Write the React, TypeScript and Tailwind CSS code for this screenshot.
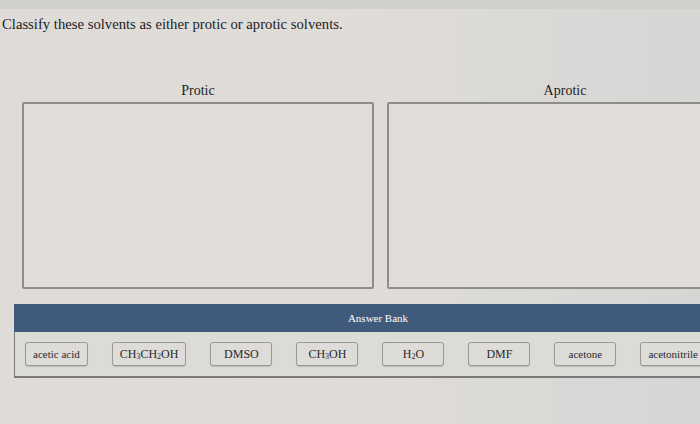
import React from "react";

type Item = { key: string; label: React.ReactNode; small?: boolean };

const Sub = ({ children }: { children: React.ReactNode }) => (
  <span className="relative top-[3px] inline-block text-[8px] leading-none">{children}</span>
);

const items: Item[] = [
  { key: "acetic", label: "acetic acid", small: true },
  {
    key: "ethanol",
    label: (
      <>
        CH<Sub>3</Sub>CH<Sub>2</Sub>OH
      </>
    ),
  },
  { key: "dmso", label: "DMSO" },
  {
    key: "methanol",
    label: (
      <>
        CH<Sub>3</Sub>OH
      </>
    ),
  },
  {
    key: "water",
    label: (
      <>
        H<Sub>2</Sub>O
      </>
    ),
  },
  { key: "dmf", label: "DMF" },
  { key: "acetone", label: "acetone", small: true },
  { key: "acetonitrile", label: "acetonitrile", small: true },
];

function Chip({ item }: { item: Item }) {
  return (
    <div
      className={`flex h-[24px] min-w-[62px] shrink-0 items-center justify-center rounded-[3px] border border-[#9a9895] bg-[#dedcd9] px-[7px] text-[#2a2a2a] shadow-[0_1px_1px_rgba(0,0,0,0.15)] ${
        item.small ? "text-[11px]" : "text-[12px]"
      }`}
    >
      {item.label}
    </div>
  );
}

function DropZone({ title, className }: { title: string; className?: string }) {
  return (
    <div className={`flex shrink-0 flex-col ${className ?? ""}`}>
      <div className="h-[17px] text-center text-[14px] leading-[17px] text-[#1e1e1e]">{title}</div>
      <div className="mt-[3px] h-[187px] rounded-[2px] border-2 border-[#8f8d8a] bg-[#e0ddd9]" />
    </div>
  );
}

export default function App() {
  return (
    <div
      className="flex h-[424px] w-[700px] flex-col overflow-hidden bg-gradient-to-r from-[#dedbd8] via-[#e0ddd9] to-[#d6d6d5]"
      style={{ fontFamily: '"Liberation Serif", "Times New Roman", serif' }}
    >
      <div className="h-[9px] bg-[#d2d0cd]" />
      <div className="pl-[2px] pt-[7px] text-[14.7px] leading-[16px] text-[#1c1c1c]">
        Classify these solvents as either protic or aprotic solvents.
      </div>

      <div className="mt-[50px] flex gap-[13px] pl-[22px]">
        <DropZone title="Protic" className="w-[352px]" />
        <DropZone title="Aprotic" className="w-[356px]" />
      </div>

      <div className="ml-[14px] mt-[15px] flex w-[728px] shrink-0 flex-col">
        <div className="flex h-[28px] items-center justify-center bg-[#3f5a7a] text-[11px] text-white">
          Answer Bank
        </div>
        <div className="flex h-[46px] items-center gap-[24px] border-b-2 border-l border-[#7b7977] bg-[#dddbd8] pl-[10px]">
          {items.map((it) => (
            <Chip key={it.key} item={it} />
          ))}
        </div>
      </div>
    </div>
  );
}
